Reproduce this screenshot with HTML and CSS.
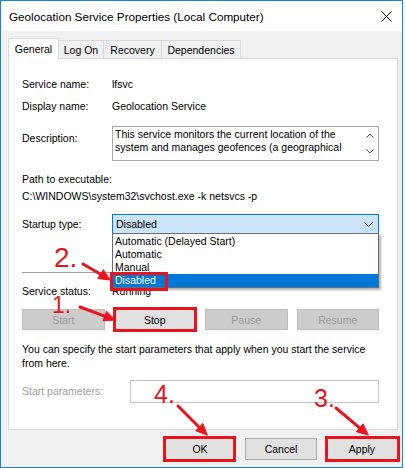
FILE: index.html
```html
<!DOCTYPE html>
<html>
<head>
<meta charset="utf-8">
<link rel="stylesheet" href="styles.css">
</head>
<body>
<div class="window">
  <div class="titlebar">
    <span class="title">Geolocation Service Properties (Local Computer)</span>
    <svg class="close" viewBox="0 0 11 11"><path d="M0.5 0.5L10.5 10.5M10.5 0.5L0.5 10.5" stroke="#000" stroke-width="1"/></svg>
  </div>
  <div class="client">
    <div class="tabs">
      <div class="tab active">General</div>
      <div class="tab w-logon">Log On</div>
      <div class="tab w-recovery">Recovery</div>
      <div class="tab w-deps">Dependencies</div>
    </div>
    <div class="panel">
      <div class="row r-first"><span class="label">Service name:</span><span>lfsvc</span></div>
      <div class="row r-display"><span class="label">Display name:</span><span>Geolocation Service</span></div>
      <div class="row r-desc">
        <span class="label label-top">Description:</span>
        <div class="textbox">
          <div class="desc-text">This service monitors the current location of the system and manages geofences (a geographical</div>
          <div class="scroll">
            <svg class="chev" viewBox="0 0 8 5"><path d="M0.5 4.5L4 1L7.5 4.5" fill="none" stroke="#606060" stroke-width="1"/></svg>
            <svg class="chev" viewBox="0 0 8 5"><path d="M0.5 0.5L4 4L7.5 0.5" fill="none" stroke="#606060" stroke-width="1"/></svg>
          </div>
        </div>
      </div>
      <div class="path-label">Path to executable:</div>
      <div class="path-value">C:\WINDOWS\system32\svchost.exe -k netsvcs -p</div>
      <div class="row r-startup">
        <span class="label">Startup type:</span>
        <div class="combo">
          <span class="combo-text">Disabled</span>
          <svg class="combo-chev" viewBox="0 0 9 5"><path d="M0.5 0.5L4.5 4.5L8.5 0.5" fill="none" stroke="#404040" stroke-width="1"/></svg>
          <div class="droplist">
            <div class="item">Automatic (Delayed Start)</div>
            <div class="item">Automatic</div>
            <div class="item">Manual</div>
            <div class="item selected">Disabled</div>
          </div>
        </div>
      </div>
      <div class="separator"></div>
      <div class="row r-status"><span class="label">Service status:</span><span>Running</span></div>
      <div class="svc-buttons">
        <div class="btn disabled">Start</div>
        <div class="btn">Stop</div>
        <div class="btn disabled">Pause</div>
        <div class="btn disabled">Resume</div>
      </div>
      <p class="hint">You can specify the start parameters that apply when you start the service from here.</p>
      <div class="row r-params">
        <span class="label label-wide muted">Start parameters:</span>
        <div class="input"></div>
      </div>
    </div>
    <div class="dlg-buttons">
      <div class="btn dlg">OK</div>
      <div class="btn dlg">Cancel</div>
      <div class="btn dlg">Apply</div>
    </div>
  </div>
</div>

<div class="annotations">
  <div class="redbox box-disabled"></div>
  <div class="redbox box-stop"></div>
  <div class="redbox box-ok"></div>
  <div class="redbox box-apply"></div>
  <span class="num num-2">2.</span>
  <span class="num num-1">1.</span>
  <span class="num num-4">4.</span>
  <span class="num num-3">3.</span>
  <svg class="arrows" viewBox="0 0 406 468">
    <g stroke="#e8131b" stroke-width="3" stroke-linecap="round" fill="#e8131b">
      <line x1="83" y1="264" x2="100.6" y2="274.3"/>
      <polygon points="110,280 98,278.6 103.2,270" stroke-width="1"/>
      <line x1="80" y1="307" x2="104.7" y2="316.2"/>
      <polygon points="115,320 103,320.9 106.4,311.5" stroke-width="1"/>
      <line x1="178" y1="406" x2="199.2" y2="427.2"/>
      <polygon points="207,435 195.7,430.7 202.7,423.7" stroke-width="1"/>
      <line x1="336" y1="408" x2="359.6" y2="427.9"/>
      <polygon points="368,435 356.4,431.7 362.8,424.1" stroke-width="1"/>
    </g>
  </svg>
</div>
</body>
</html>
```

FILE: styles.css
```css
* { box-sizing: border-box; }
html, body { margin: 0; padding: 0; background: #ffffff; }
body {
  font-family: "Liberation Sans", Arial, sans-serif;
  font-size: 10.5px;
  color: #000;
  width: 406px;
  height: 468px;
  overflow: hidden;
}

.window {
  width: 403px;
  height: 468px;
  border: 1px solid #1883d7;
  background: #f0f0f0;
  display: flex;
  flex-direction: column;
}

.titlebar {
  height: 30px;
  flex: none;
  background: #ffffff;
  display: flex;
  align-items: center;
  justify-content: space-between;
  padding: 0 10px 0 8px;
}
.title { font-size: 11.7px; }
.close { width: 11px; height: 11px; }

.client { padding: 7px 4px 0 7px; }

.tabs {
  display: flex;
  align-items: flex-end;
  height: 20px;
}
.tab {
  height: 18px;
  border: 1px solid #d9d9d9;
  border-bottom: none;
  background: #f0f0f0;
  display: flex;
  align-items: center;
  justify-content: center;
  margin-left: -1px;
  padding-top: 1px;
}
.tab.active {
  width: 51px;
  height: 21px;
  margin-left: 0;
  margin-bottom: -1px;
  background: #ffffff;
  position: relative;
  z-index: 1;
  padding-top: 0;
  padding-bottom: 1px;
}
.w-logon { width: 46px; }
.w-recovery { width: 59px; }
.w-deps { width: 80px; }

.panel {
  width: 390px;
  height: 372px;
  background: #ffffff;
  border: 1px solid #d9d9d9;
  padding: 18px 18px 0 13px;
}

.row {
  display: flex;
  align-items: center;
  line-height: 15px;
}
.label { width: 90px; flex: none; }
.label-wide { width: 108px; }
.label-top { align-self: flex-start; padding-top: 5px; }
.muted { color: #a0a0a0; }

.r-display { margin-top: 7px; }
.r-desc { margin-top: 12px; }

.textbox {
  flex: 1;
  height: 35px;
  border: 1px solid #a9a9a9;
  display: flex;
  overflow: hidden;
}
.desc-text {
  flex: 1;
  line-height: 13px;
  padding: 1px 0 0 2px;
}
.scroll {
  width: 17px;
  flex: none;
  display: flex;
  flex-direction: column;
  align-items: center;
  padding-top: 6px;
  gap: 11px;
}
.chev { width: 8px; height: 5px; display: block; }

.path-label { margin-top: 10px; line-height: 17px; }
.path-value { line-height: 17px; }

.r-startup { margin-top: 9px; }
.combo {
  flex: 1;
  height: 21px;
  border: 1px solid #0078d7;
  background: #cce4f7;
  display: flex;
  align-items: center;
  justify-content: space-between;
  padding: 0 5px 0 3px;
  position: relative;
}
.combo-chev { width: 9px; height: 5px; }
.droplist {
  position: absolute;
  top: 18px;
  left: -1px;
  right: -1px;
  background: #ffffff;
  border: 1px solid #5f6f84;
  padding: 1px 0 0 0;
  box-shadow: 2px 2px 2px rgba(0, 0, 0, 0.3);
  z-index: 2;
}
.item { line-height: 13px; padding-left: 2px; }
.item.selected { background: #0078d7; color: #ffffff; }

.separator {
  margin-top: 37px;
  height: 1px;
  background: #a0a0a0;
}

.r-status { margin-top: 11px; }

.svc-buttons {
  margin-top: 10px;
  display: grid;
  grid-template-columns: repeat(4, 1fr);
  gap: 9px;
}
.btn {
  height: 21px;
  background: #e1e1e1;
  border: 1px solid #adadad;
  display: flex;
  align-items: center;
  justify-content: center;
}
.btn.disabled {
  background: #cccccc;
  border-color: #bfbfbf;
  color: #9a9a9a;
}

.hint {
  margin: 12px 0 0 0;
  line-height: 14px;
}

.r-params { margin-top: 10px; }
.input {
  flex: 1;
  height: 23px;
  border: 1px solid #c4c4c4;
  background: #ffffff;
}

.dlg-buttons {
  margin-top: 8px;
  width: 390px;
  display: flex;
  justify-content: flex-end;
  gap: 9px;
}
.btn.dlg { width: 72px; height: 22px; }

.annotations {
  position: absolute;
  left: 0;
  top: 0;
  width: 406px;
  height: 468px;
  pointer-events: none;
  z-index: 10;
}
.redbox {
  position: absolute;
  border: 3px solid #e8131b;
}
.box-disabled { left: 110px; top: 272px; width: 58px; height: 19px; }
.box-stop { left: 113px; top: 307px; width: 84px; height: 25px; }
.box-ok { left: 163px; top: 436px; width: 73px; height: 26px; }
.box-apply { left: 325px; top: 436px; width: 75px; height: 26px; }

.num {
  position: absolute;
  color: #e8131b;
  font-family: "Liberation Sans", Arial, sans-serif;
  line-height: 1;
}
.num-2 { left: 54px; top: 244px; font-size: 28px; }
.num-1 { left: 52px; top: 294px; font-size: 23px; }
.num-4 { left: 154px; top: 382px; font-size: 25px; }
.num-3 { left: 314px; top: 386px; font-size: 25px; }

.arrows {
  position: absolute;
  left: 0;
  top: 0;
  width: 406px;
  height: 468px;
}
```
